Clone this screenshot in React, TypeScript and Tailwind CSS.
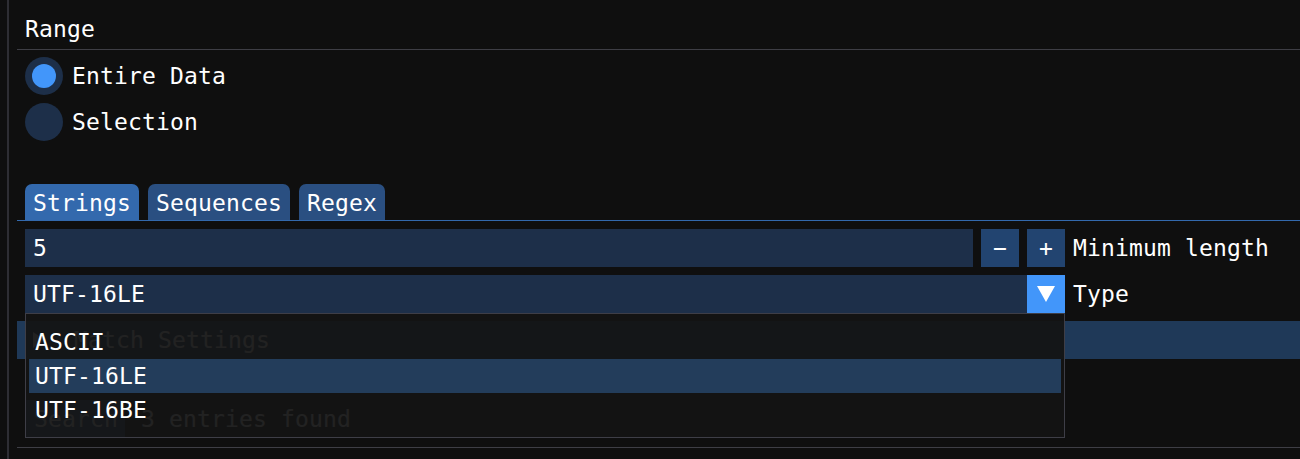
import React, { useState } from "react";

const font = { fontFamily: '"DejaVu Sans Mono", "Liberation Mono", monospace' };

const Radio = ({ label, checked }: { label: string; checked: boolean }) => (
	<div className="flex h-[38px] items-center pl-[8px]">
		<div className="flex h-[38px] w-[38px] items-center justify-center rounded-full bg-[#1d2f49]">
			{checked && <div className="h-[24px] w-[24px] rounded-full bg-[#4296fa]" />}
		</div>
		<span className="ml-[9px] leading-[26px]">{label}</span>
	</div>
);

const tabs = [
	{ name: "Strings", w: "w-[114px]" },
	{ name: "Sequences", w: "w-[142px]" },
	{ name: "Regex", w: "w-[86px]" },
];

const App = () => {
	const [active] = useState("Strings");
	const types = ["ASCII", "UTF-16LE", "UTF-16BE"];

	return (
		<div
			style={font}
			className="relative flex h-[459px] w-[1300px] overflow-hidden bg-[#0f0f0f] text-[23px] tracking-[0.15px] text-white"
		>
			<div className="w-[7px] shrink-0" />
			<div className="w-[2px] shrink-0 bg-[#2e2e34]" />
			<div className="flex flex-1 flex-col pl-[8px]">
				{/* range */}
				<div className="h-[49px] pl-[8px] pt-[16px] leading-[26px]">Range</div>
				<div className="h-px bg-[#3e3e45]" />
				<div className="mt-[7px] flex flex-col gap-[8px]">
					<Radio label="Entire Data" checked />
					<Radio label="Selection" checked={false} />
				</div>

				{/* tabs */}
				<div className="mt-[43px] flex gap-[9px] pl-[8px]">
					{tabs.map((t) => (
						<div
							key={t.name}
							className={`${t.w} h-[36px] rounded-t-[7px] pl-[8px] pt-[6px] leading-[26px] ${
								active === t.name ? "bg-[#3369ad]" : "bg-[#2a4f81]"
							}`}
						>
							{t.name}
						</div>
					))}
				</div>
				<div className="h-px bg-[#3369ad]" />

				{/* minimum length */}
				<div className="mt-[8px] flex h-[38px] items-center gap-[8px] pl-[8px]">
					<div className="h-[38px] w-[948px] bg-[#1d2f49] pl-[8px] pt-[6px] leading-[26px]">5</div>
					<div className="flex h-[38px] w-[38px] items-center justify-center bg-[#224470] leading-[26px]">−</div>
					<div className="flex h-[38px] w-[38px] items-center justify-center bg-[#224470] leading-[26px]">+</div>
					<span className="leading-[26px]">Minimum length</span>
				</div>

				{/* type */}
				<div className="mt-[8px] flex h-[38px] items-center gap-[8px] pl-[8px]">
					<div className="flex h-[38px] w-[1040px] bg-[#1d2f49]">
						<div className="flex-1 pl-[8px] pt-[6px] leading-[26px]">UTF-16LE</div>
						<div className="flex h-[38px] w-[38px] items-center justify-center bg-[#4296fa]">
							<svg width="18" height="16" viewBox="0 0 18 16">
								<polygon points="0,0 18,0 9,16" fill="#ffffff" />
							</svg>
						</div>
					</div>
					<span className="leading-[26px]">Type</span>
				</div>

				{/* match settings header */}
				<div className="mt-[8px] flex h-[38px] items-center bg-[#1f3958] pl-[8px] leading-[26px] text-white">
					<svg width="26" height="26" viewBox="0 0 26 26" className="mr-[23px]">
						<polygon points="8,5 20,13 8,21" fill="#ffffff" />
					</svg>
					Match Settings
				</div>

				{/* search row */}
				<div className="mt-[41px] flex h-[38px] items-center gap-[16px] pl-[8px]">
					<div className="h-[38px] w-[100px] bg-[#224470] pl-[9px] pt-[6px] leading-[26px]">Search</div>
					<span className="leading-[26px]">3 entries found</span>
				</div>
				<div className="mt-[9px] h-px bg-[#3e3e45]" />
			</div>

			{/* open combo popup */}
			<div className="absolute left-[25px] top-[313px] h-[125px] w-[1040px] border border-[#3e3e47] bg-[#141414]/[0.94] px-[3px] pt-[11px]">
				{types.map((t) => (
					<div
						key={t}
						className={`h-[34px] pl-[6px] pt-[4px] leading-[26px] ${
							t === "UTF-16LE" ? "bg-[#233d5b]" : ""
						}`}
					>
						{t}
					</div>
				))}
			</div>
		</div>
	);
};

export default App;
